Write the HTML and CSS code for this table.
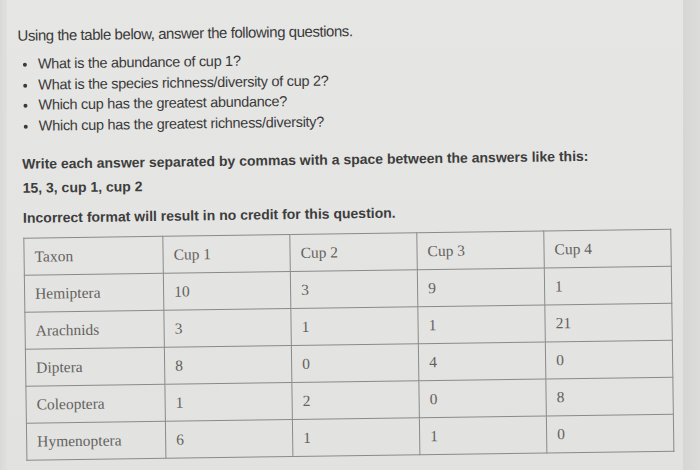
FILE: index.html
```html
<!DOCTYPE html>
<html lang="en">
<head>
<meta charset="utf-8">
<title>Question</title>
<link rel="stylesheet" href="styles.css">
</head>
<body>
<div class="screen">
  <div class="edge-left"></div>
  <div class="page">
    <div class="content">
      <p class="intro">Using the table below, answer the following questions.</p>
      <ul class="questions">
        <li>What is the abundance of cup 1?</li>
        <li>What is the species richness/diversity of cup 2?</li>
        <li>Which cup has the greatest abundance?</li>
        <li>Which cup has the greatest richness/diversity?</li>
      </ul>
      <p class="strong first">Write each answer separated by commas with a space between the answers like this:</p>
      <p class="strong second">15, 3, cup 1, cup 2</p>
      <p class="strong third">Incorrect format will result in no credit for this question.</p>
      <table class="data">
        <tr><td>Taxon</td><td>Cup 1</td><td>Cup 2</td><td>Cup 3</td><td>Cup 4</td></tr>
        <tr><td>Hemiptera</td><td>10</td><td>3</td><td>9</td><td>1</td></tr>
        <tr><td>Arachnids</td><td>3</td><td>1</td><td>1</td><td>21</td></tr>
        <tr><td>Diptera</td><td>8</td><td>0</td><td>4</td><td>0</td></tr>
        <tr><td>Coleoptera</td><td>1</td><td>2</td><td>0</td><td>8</td></tr>
        <tr><td>Hymenoptera</td><td>6</td><td>1</td><td>1</td><td>0</td></tr>
      </table>
    </div>
  </div>
  <div class="edge-right"></div>
</div>
</body>
</html>
```
FILE: styles.css
```css
html, body {
  margin: 0;
  padding: 0;
  background: #e3e3e1;
}
.screen {
  width: 700px;
  height: 470px;
  overflow: hidden;
  display: flex;
  background: linear-gradient(180deg, #e6e6e4 0%, #e2e2e0 100%);
}
.edge-left {
  width: 7px;
  flex: none;
  background: linear-gradient(90deg, #d9d9d7, #e0e0de);
}
.edge-right {
  width: 17px;
  flex: none;
  background: linear-gradient(90deg, #d6d6d4, #dcdcda);
}
.page {
  flex: 1;
  position: relative;
}
.content {
  transform: rotate(-0.8deg);
  transform-origin: 0 0;
  padding: 25px 0 0 10px;
  font-family: "Liberation Sans", Arial, sans-serif;
  color: #3a3a3a;
}
.intro {
  margin: 0;
  font-size: 15px;
  line-height: 22px;
  letter-spacing: -0.45px;
}
.questions {
  margin: 7px 0 0;
  padding: 0 0 0 20px;
  font-size: 14.5px;
  line-height: 20.7px;
  letter-spacing: -0.3px;
}
.strong {
  margin: 0;
  font-weight: bold;
  font-size: 14px;
  line-height: 20px;
  color: #3d3d3d;
  padding-left: 3px;
}
.strong.first {
  margin-top: 17.5px;
}
.strong.second {
  margin-top: 4px;
}
.strong.third {
  margin-top: 10px;
}
.data {
  margin: 10px 0 0 3px;
  border-collapse: collapse;
  font-family: "Liberation Serif", "Times New Roman", serif;
  font-size: 15.5px;
  color: #646260;
}
.data td {
  border: 1.5px solid #8a8a8a;
  height: 36px;
  padding: 0 8px 0 10px;
  width: 108px;
  vertical-align: middle;
}
.data td:first-child {
  width: 120px;
}
```
